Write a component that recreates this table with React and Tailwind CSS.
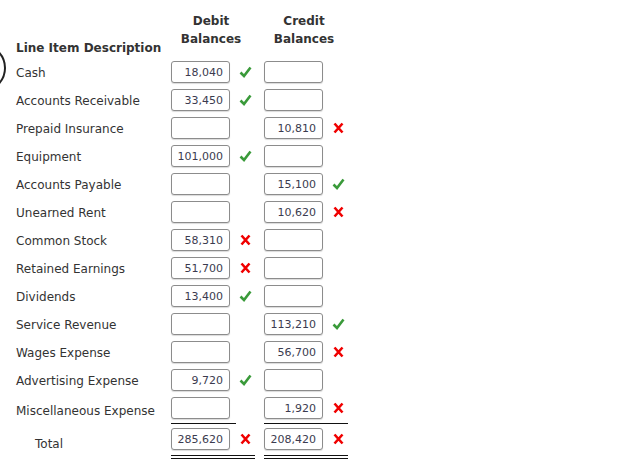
import React from 'react';

const rows = [
  { label: 'Cash', debit: '18,040', dm: 'ok', credit: '', cm: null },
  { label: 'Accounts Receivable', debit: '33,450', dm: 'ok', credit: '', cm: null },
  { label: 'Prepaid Insurance', debit: '', dm: null, credit: '10,810', cm: 'bad' },
  { label: 'Equipment', debit: '101,000', dm: 'ok', credit: '', cm: null },
  { label: 'Accounts Payable', debit: '', dm: null, credit: '15,100', cm: 'ok' },
  { label: 'Unearned Rent', debit: '', dm: null, credit: '10,620', cm: 'bad' },
  { label: 'Common Stock', debit: '58,310', dm: 'bad', credit: '', cm: null },
  { label: 'Retained Earnings', debit: '51,700', dm: 'bad', credit: '', cm: null },
  { label: 'Dividends', debit: '13,400', dm: 'ok', credit: '', cm: null },
  { label: 'Service Revenue', debit: '', dm: null, credit: '113,210', cm: 'ok' },
  { label: 'Wages Expense', debit: '', dm: null, credit: '56,700', cm: 'bad' },
  { label: 'Advertising Expense', debit: '9,720', dm: 'ok', credit: '', cm: null },
  { label: 'Miscellaneous Expense', debit: '', dm: null, credit: '1,920', cm: 'bad' },
];

function Mark({ type }) {
  if (type === 'ok') {
    return (
      <svg width="13" height="12" viewBox="0 0 13 12" className="block">
        <path d="M1.5 6.5 L5 10 L11.5 1.5" fill="none" stroke="#3a9a3a" strokeWidth="2.6" strokeLinejoin="miter" />
      </svg>
    );
  }
  if (type === 'bad') {
    return (
      <svg width="11" height="12" viewBox="0 0 11 12" className="block">
        <path d="M1.5 1.5 L9.5 10.5 M9.5 1.5 L1.5 10.5" fill="none" stroke="#f00000" strokeWidth="2.6" />
      </svg>
    );
  }
  return null;
}

function Box({ value }) {
  return (
    <div className="w-[59px] h-[22px] border border-[#8c8c8c] rounded-[3px] bg-white shadow-[0_1px_1px_rgba(0,0,0,0.15)] flex items-center justify-end pr-[6px] text-[11px] text-[#3b3b4f] leading-none">
      {value}
    </div>
  );
}

function Cell({ value, mark, width }) {
  return (
    <div className={`flex items-center ${width}`}>
      <Box value={value} />
      <div className="w-[26px] flex justify-center pl-[4px]">
        <Mark type={mark} />
      </div>
    </div>
  );
}

export default function App() {
  return (
    <div className="relative w-[617px] h-[471px] bg-white overflow-hidden text-[#333]" style={{ fontFamily: '"DejaVu Sans", Verdana, sans-serif' }}>
      <div className="absolute left-[-42px] top-[44px] w-[48px] h-[48px] rounded-full border-2 border-[#222]"></div>

      <div className="flex h-[58px]">
        <div className="w-[171px] pl-[16px] flex items-end pb-[1px]">
          <span className="text-[12px] font-bold leading-[18px] text-[#333]">Line Item Description</span>
        </div>
        <div className="w-[80px] pt-[12px] text-center text-[12px] font-bold leading-[18px]">
          <div>Debit</div>
          <div>Balances</div>
        </div>
        <div className="w-[13px]"></div>
        <div className="w-[80px] pt-[12px] text-center text-[12px] font-bold leading-[18px]">
          <div>Credit</div>
          <div>Balances</div>
        </div>
      </div>

      {rows.map((r) => (
        <div key={r.label} className="flex items-center h-[28px]">
          <div className={`w-[171px] pl-[16px] text-[12px] ${r.label === 'Miscellaneous Expense' ? 'pt-[5px]' : 'pt-[2px]'}`}>{r.label}</div>
          <Cell value={r.debit} mark={r.dm} width="w-[93px]" />
          <Cell value={r.credit} mark={r.cm} width="w-[85px]" />
        </div>
      ))}

      <div className="flex mt-[1px]">
        <div className="w-[171px]"></div>
        <div className="w-[65px] border-t border-[#111]"></div>
        <div className="w-[28px]"></div>
        <div className="w-[84px] border-t border-[#111]"></div>
      </div>

      <div className="flex items-center h-[28px] mt-[1px]">
        <div className="w-[171px] pl-[35px] text-[12px] pt-[9px]">Total</div>
        <Cell value="285,620" mark="bad" width="w-[93px]" />
        <Cell value="208,420" mark="bad" width="w-[85px]" />
      </div>

      <div className="flex mt-[2px]">
        <div className="w-[171px]"></div>
        <div className="w-[84px] h-[4px] border-y border-[#111]"></div>
        <div className="w-[9px]"></div>
        <div className="w-[84px] h-[4px] border-y border-[#111]"></div>
      </div>
    </div>
  );
}
